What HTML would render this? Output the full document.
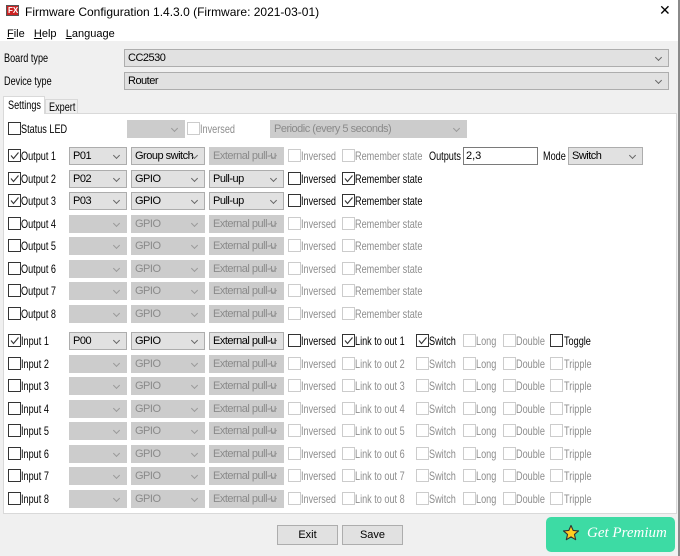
<!DOCTYPE html><html><head><meta charset="utf-8"><style>
*{box-sizing:border-box;margin:0;padding:0}
body{width:680px;height:556px;overflow:hidden;background:#f0f0f0;font-family:"Liberation Sans",sans-serif;font-size:11px;color:#000;position:relative}
.a{position:absolute}
.s{display:inline-block;font-size:12px;transform:scaleX(.76);transform-origin:left center;white-space:nowrap}
.top{left:0;top:0;width:680px;height:41px;background:#fff}
.frame{left:678px;top:0;width:2px;height:556px;background:#8a8a8a}
.cb{position:absolute;width:13px;height:13px;border:1px solid #333;background:#fff;top:2px}
.cb.d{border-color:#ccc}
.cb svg{position:absolute;left:0px;top:0px}
.l{position:absolute;top:1px;line-height:17px;font-size:12px;white-space:nowrap;transform:scaleX(.76);transform-origin:left center}
.l.d{color:#8d8d8d}
.co{position:absolute;top:0;height:18px;border:1px solid #adadad;background:#e1e1e1;line-height:16px;padding-left:3px;white-space:nowrap;overflow:hidden;letter-spacing:-0.5px}
.co.d{background:#cccccc;border-color:#cccccc;color:#8a8a8a}
.co:after{content:"";position:absolute;right:7px;top:5px;width:4px;height:4px;border-right:1px solid #666;border-bottom:1px solid #666;transform:rotate(45deg)}
.co.d:after{border-color:#999}
.row{position:absolute;left:0;width:676px;height:18px}
.btn{position:absolute;height:20px;border:1px solid #adadad;background:#e1e1e1;text-align:center;line-height:18px}
</style></head><body>
<div class="a top"></div>
<div class="a" style="left:6px;top:5px;width:13px;height:11px;background:#c22;border:1px solid #555"></div>
<div class="a" style="left:8px;top:6px;font-size:8px;color:#fff;font-weight:bold">FX</div>
<div class="a" style="left:25px;top:5px;font-size:12px">Firmware Configuration 1.4.3.0 (Firmware: 2021-03-01)</div>
<div class="a" style="left:659px;top:3px;font-size:14px;font-family:'DejaVu Sans',sans-serif">✕</div>
<div class="a" style="left:7px;top:28px;font-size:11px"><u>F</u>ile&nbsp;&nbsp;&nbsp;<u>H</u>elp&nbsp;&nbsp;&nbsp;<u>L</u>anguage</div>
<div class="a frame"></div>
<div class="a" style="left:4px;top:51px"><span class="s">Board type</span></div>
<div class="co" style="left:124px;top:49px;width:545px">CC2530</div>
<div class="a" style="left:4px;top:74px"><span class="s">Device type</span></div>
<div class="co" style="left:124px;top:72px;width:545px">Router</div>
<div class="a" style="left:3px;top:113px;width:674px;height:401px;background:#fff;border:1px solid #d9d9d9"></div>
<div class="a" style="left:3px;top:96px;width:42px;height:18px;background:#fff;border:1px solid #d9d9d9;border-bottom:none;padding:1px 0 0 4px"><span class="s">Settings</span></div>
<div class="a" style="left:45px;top:99px;width:33px;height:15px;border:1px solid #d9d9d9;border-bottom:none;padding:0 0 0 3px"><span class="s">Expert</span></div>

<div class="row" style="top:120px"><div class="cb" style="left:8px"></div><div class="l" style="left:21px">Status LED</div>
<div class="co d" style="left:127px;width:58px"></div><div class="cb d" style="left:187px"></div><div class="l d" style="left:200px">Inversed</div>
<div class="co d" style="left:270px;width:197px">Periodic (every 5 seconds)</div></div>

<svg width="0" height="0" style="position:absolute"><defs><path id="ck" d="M2 5.5L4.5 8.5 9.5 2.5" fill="none" stroke="#333" stroke-width="1.1"/></defs></svg>

<div class="row" style="top:147px"><div class="cb" style="left:8px"><svg width="11" height="11"><use href="#ck"/></svg></div><div class="l" style="left:21px">Output 1</div>
<div class="co" style="left:69px;width:58px">P01</div><div class="co" style="left:131px;width:74px">Group switch</div><div class="co d" style="left:209px;width:75px">External pull-u</div>
<div class="cb d" style="left:288px"></div><div class="l d" style="left:301px">Inversed</div><div class="cb d" style="left:342px"></div><div class="l d" style="left:355px">Remember state</div>
<div class="l" style="left:429px">Outputs</div><div class="a" style="left:463px;top:0;width:75px;height:18px;border:1px solid #7a7a7a;background:#fff;padding-left:2px;line-height:16px">2,3</div>
<div class="l" style="left:543px">Mode</div><div class="co" style="left:568px;width:75px">Switch</div></div>

<div class="row" style="top:169.5px"><div class="cb" style="left:8px"><svg width="11" height="11"><use href="#ck"/></svg></div><div class="l" style="left:21px">Output 2</div>
<div class="co" style="left:69px;width:58px">P02</div><div class="co" style="left:131px;width:74px">GPIO</div><div class="co" style="left:209px;width:75px">Pull-up</div>
<div class="cb" style="left:288px"></div><div class="l" style="left:301px">Inversed</div><div class="cb" style="left:342px"><svg width="11" height="11"><use href="#ck"/></svg></div><div class="l" style="left:355px">Remember state</div></div>

<div class="row" style="top:192px"><div class="cb" style="left:8px"><svg width="11" height="11"><use href="#ck"/></svg></div><div class="l" style="left:21px">Output 3</div>
<div class="co" style="left:69px;width:58px">P03</div><div class="co" style="left:131px;width:74px">GPIO</div><div class="co" style="left:209px;width:75px">Pull-up</div>
<div class="cb" style="left:288px"></div><div class="l" style="left:301px">Inversed</div><div class="cb" style="left:342px"><svg width="11" height="11"><use href="#ck"/></svg></div><div class="l" style="left:355px">Remember state</div></div>

<div class="row" style="top:214.5px"><div class="cb" style="left:8px"></div><div class="l" style="left:21px">Output 4</div><div class="co d" style="left:69px;width:58px"></div><div class="co d" style="left:131px;width:74px">GPIO</div><div class="co d" style="left:209px;width:75px">External pull-u</div><div class="cb d" style="left:288px"></div><div class="l d" style="left:301px">Inversed</div><div class="cb d" style="left:342px"></div><div class="l d" style="left:355px">Remember state</div></div>
<div class="row" style="top:237px"><div class="cb" style="left:8px"></div><div class="l" style="left:21px">Output 5</div><div class="co d" style="left:69px;width:58px"></div><div class="co d" style="left:131px;width:74px">GPIO</div><div class="co d" style="left:209px;width:75px">External pull-u</div><div class="cb d" style="left:288px"></div><div class="l d" style="left:301px">Inversed</div><div class="cb d" style="left:342px"></div><div class="l d" style="left:355px">Remember state</div></div>
<div class="row" style="top:259.5px"><div class="cb" style="left:8px"></div><div class="l" style="left:21px">Output 6</div><div class="co d" style="left:69px;width:58px"></div><div class="co d" style="left:131px;width:74px">GPIO</div><div class="co d" style="left:209px;width:75px">External pull-u</div><div class="cb d" style="left:288px"></div><div class="l d" style="left:301px">Inversed</div><div class="cb d" style="left:342px"></div><div class="l d" style="left:355px">Remember state</div></div>
<div class="row" style="top:282px"><div class="cb" style="left:8px"></div><div class="l" style="left:21px">Output 7</div><div class="co d" style="left:69px;width:58px"></div><div class="co d" style="left:131px;width:74px">GPIO</div><div class="co d" style="left:209px;width:75px">External pull-u</div><div class="cb d" style="left:288px"></div><div class="l d" style="left:301px">Inversed</div><div class="cb d" style="left:342px"></div><div class="l d" style="left:355px">Remember state</div></div>
<div class="row" style="top:304.5px"><div class="cb" style="left:8px"></div><div class="l" style="left:21px">Output 8</div><div class="co d" style="left:69px;width:58px"></div><div class="co d" style="left:131px;width:74px">GPIO</div><div class="co d" style="left:209px;width:75px">External pull-u</div><div class="cb d" style="left:288px"></div><div class="l d" style="left:301px">Inversed</div><div class="cb d" style="left:342px"></div><div class="l d" style="left:355px">Remember state</div></div>

<div class="row" style="top:332px"><div class="cb" style="left:8px"><svg width="11" height="11"><use href="#ck"/></svg></div><div class="l" style="left:21px">Input 1</div>
<div class="co" style="left:69px;width:58px">P00</div><div class="co" style="left:131px;width:74px">GPIO</div><div class="co" style="left:209px;width:75px">External pull-u</div>
<div class="cb" style="left:288px"></div><div class="l" style="left:301px">Inversed</div><div class="cb" style="left:342px"><svg width="11" height="11"><use href="#ck"/></svg></div><div class="l" style="left:355px">Link to out 1</div>
<div class="cb" style="left:416px"><svg width="11" height="11"><use href="#ck"/></svg></div><div class="l" style="left:429px">Switch</div><div class="cb d" style="left:463px"></div><div class="l d" style="left:476px">Long</div><div class="cb d" style="left:503px"></div><div class="l d" style="left:516px">Double</div><div class="cb" style="left:550px"></div><div class="l" style="left:564px">Toggle</div></div>

<div class="row" style="top:354.5px"><div class="cb" style="left:8px"></div><div class="l" style="left:21px">Input 2</div><div class="co d" style="left:69px;width:58px"></div><div class="co d" style="left:131px;width:74px">GPIO</div><div class="co d" style="left:209px;width:75px">External pull-u</div><div class="cb d" style="left:288px"></div><div class="l d" style="left:301px">Inversed</div><div class="cb d" style="left:342px"></div><div class="l d" style="left:355px">Link to out 2</div><div class="cb d" style="left:416px"></div><div class="l d" style="left:429px">Switch</div><div class="cb d" style="left:463px"></div><div class="l d" style="left:476px">Long</div><div class="cb d" style="left:503px"></div><div class="l d" style="left:516px">Double</div><div class="cb d" style="left:550px"></div><div class="l d" style="left:564px">Tripple</div></div>
<div class="row" style="top:377px"><div class="cb" style="left:8px"></div><div class="l" style="left:21px">Input 3</div><div class="co d" style="left:69px;width:58px"></div><div class="co d" style="left:131px;width:74px">GPIO</div><div class="co d" style="left:209px;width:75px">External pull-u</div><div class="cb d" style="left:288px"></div><div class="l d" style="left:301px">Inversed</div><div class="cb d" style="left:342px"></div><div class="l d" style="left:355px">Link to out 3</div><div class="cb d" style="left:416px"></div><div class="l d" style="left:429px">Switch</div><div class="cb d" style="left:463px"></div><div class="l d" style="left:476px">Long</div><div class="cb d" style="left:503px"></div><div class="l d" style="left:516px">Double</div><div class="cb d" style="left:550px"></div><div class="l d" style="left:564px">Tripple</div></div>
<div class="row" style="top:399.5px"><div class="cb" style="left:8px"></div><div class="l" style="left:21px">Input 4</div><div class="co d" style="left:69px;width:58px"></div><div class="co d" style="left:131px;width:74px">GPIO</div><div class="co d" style="left:209px;width:75px">External pull-u</div><div class="cb d" style="left:288px"></div><div class="l d" style="left:301px">Inversed</div><div class="cb d" style="left:342px"></div><div class="l d" style="left:355px">Link to out 4</div><div class="cb d" style="left:416px"></div><div class="l d" style="left:429px">Switch</div><div class="cb d" style="left:463px"></div><div class="l d" style="left:476px">Long</div><div class="cb d" style="left:503px"></div><div class="l d" style="left:516px">Double</div><div class="cb d" style="left:550px"></div><div class="l d" style="left:564px">Tripple</div></div>
<div class="row" style="top:422px"><div class="cb" style="left:8px"></div><div class="l" style="left:21px">Input 5</div><div class="co d" style="left:69px;width:58px"></div><div class="co d" style="left:131px;width:74px">GPIO</div><div class="co d" style="left:209px;width:75px">External pull-u</div><div class="cb d" style="left:288px"></div><div class="l d" style="left:301px">Inversed</div><div class="cb d" style="left:342px"></div><div class="l d" style="left:355px">Link to out 5</div><div class="cb d" style="left:416px"></div><div class="l d" style="left:429px">Switch</div><div class="cb d" style="left:463px"></div><div class="l d" style="left:476px">Long</div><div class="cb d" style="left:503px"></div><div class="l d" style="left:516px">Double</div><div class="cb d" style="left:550px"></div><div class="l d" style="left:564px">Tripple</div></div>
<div class="row" style="top:444.5px"><div class="cb" style="left:8px"></div><div class="l" style="left:21px">Input 6</div><div class="co d" style="left:69px;width:58px"></div><div class="co d" style="left:131px;width:74px">GPIO</div><div class="co d" style="left:209px;width:75px">External pull-u</div><div class="cb d" style="left:288px"></div><div class="l d" style="left:301px">Inversed</div><div class="cb d" style="left:342px"></div><div class="l d" style="left:355px">Link to out 6</div><div class="cb d" style="left:416px"></div><div class="l d" style="left:429px">Switch</div><div class="cb d" style="left:463px"></div><div class="l d" style="left:476px">Long</div><div class="cb d" style="left:503px"></div><div class="l d" style="left:516px">Double</div><div class="cb d" style="left:550px"></div><div class="l d" style="left:564px">Tripple</div></div>
<div class="row" style="top:467px"><div class="cb" style="left:8px"></div><div class="l" style="left:21px">Input 7</div><div class="co d" style="left:69px;width:58px"></div><div class="co d" style="left:131px;width:74px">GPIO</div><div class="co d" style="left:209px;width:75px">External pull-u</div><div class="cb d" style="left:288px"></div><div class="l d" style="left:301px">Inversed</div><div class="cb d" style="left:342px"></div><div class="l d" style="left:355px">Link to out 7</div><div class="cb d" style="left:416px"></div><div class="l d" style="left:429px">Switch</div><div class="cb d" style="left:463px"></div><div class="l d" style="left:476px">Long</div><div class="cb d" style="left:503px"></div><div class="l d" style="left:516px">Double</div><div class="cb d" style="left:550px"></div><div class="l d" style="left:564px">Tripple</div></div>
<div class="row" style="top:489.5px"><div class="cb" style="left:8px"></div><div class="l" style="left:21px">Input 8</div><div class="co d" style="left:69px;width:58px"></div><div class="co d" style="left:131px;width:74px">GPIO</div><div class="co d" style="left:209px;width:75px">External pull-u</div><div class="cb d" style="left:288px"></div><div class="l d" style="left:301px">Inversed</div><div class="cb d" style="left:342px"></div><div class="l d" style="left:355px">Link to out 8</div><div class="cb d" style="left:416px"></div><div class="l d" style="left:429px">Switch</div><div class="cb d" style="left:463px"></div><div class="l d" style="left:476px">Long</div><div class="cb d" style="left:503px"></div><div class="l d" style="left:516px">Double</div><div class="cb d" style="left:550px"></div><div class="l d" style="left:564px">Tripple</div></div>

<div class="btn" style="left:277px;top:525px;width:61px">Exit</div>
<div class="btn" style="left:342px;top:525px;width:61px">Save</div>
<div class="a" style="left:546px;top:517px;width:129px;height:35px;background:#3ddba4;border-radius:5px"></div>
<svg class="a" style="left:562px;top:524px" width="18" height="18" viewBox="0 0 24 24"><path d="M12 2l2.9 6.6 7.1.6-5.4 4.7 1.6 7-6.2-3.7-6.2 3.7 1.6-7L2 9.2l7.1-.6z" fill="#ffcc22" stroke="#333" stroke-width="1.5" stroke-linejoin="round"/></svg>
<div class="a" style="left:587px;top:525px;font-size:15px;color:#fff;font-style:italic;font-family:'Liberation Serif',serif">Get Premium</div>
</body></html>
